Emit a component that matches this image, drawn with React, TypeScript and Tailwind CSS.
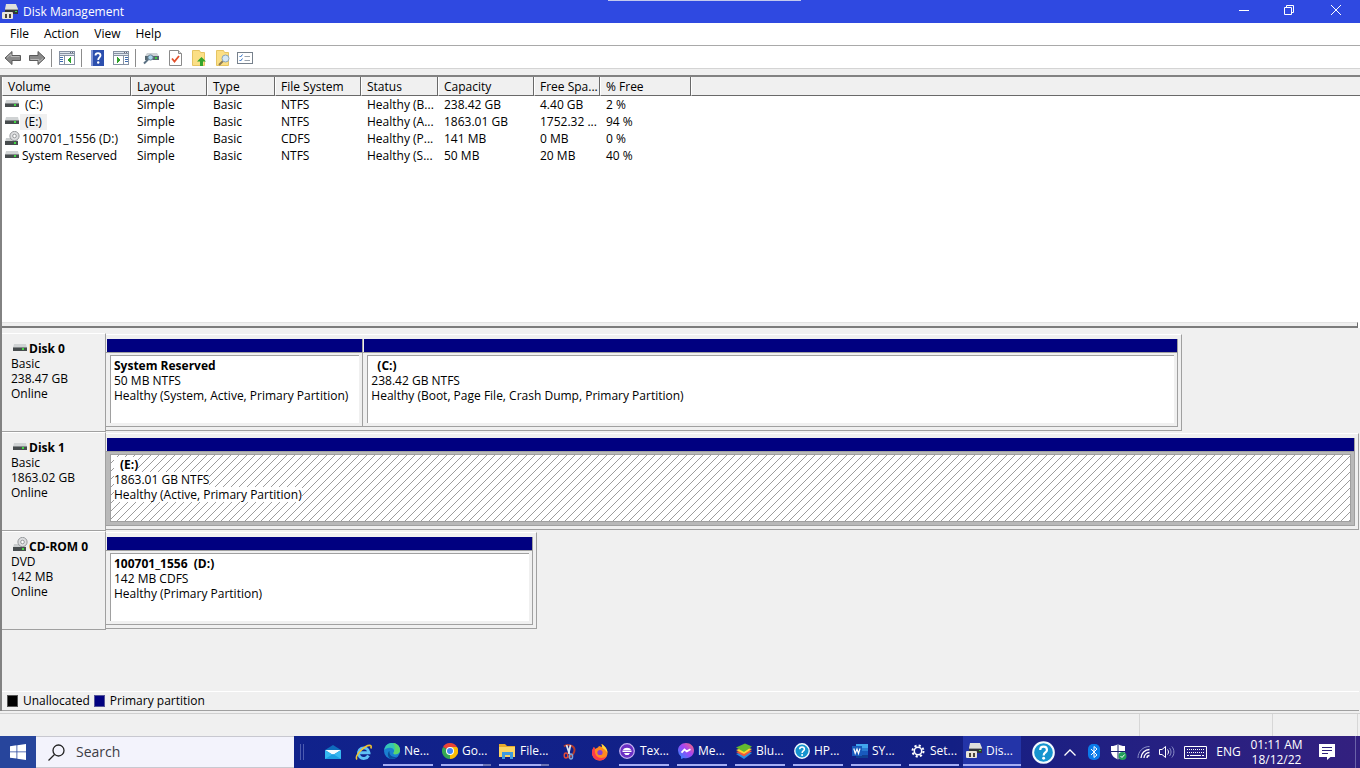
import type { ReactNode } from "react"

const volumes = [
  { name: "(C:)", icon: "disk", fs: "NTFS", status: "Healthy (B...", capacity: "238.42 GB", free: "4.40 GB", percent: "2 %" },
  { name: "(E:)", icon: "disk", fs: "NTFS", status: "Healthy (A...", capacity: "1863.01 GB", free: "1752.32 ...", percent: "94 %", selected: true },
  { name: "100701_1556 (D:)", icon: "cd", fs: "CDFS", status: "Healthy (P...", capacity: "141 MB", free: "0 MB", percent: "0 %" },
  { name: "System Reserved", icon: "disk", fs: "NTFS", status: "Healthy (S...", capacity: "50 MB", free: "20 MB", percent: "40 %" },
]

const columns = [
  { title: "Volume", width: "w-[129px]" },
  { title: "Layout", width: "w-[76px]" },
  { title: "Type", width: "w-[68px]" },
  { title: "File System", width: "w-[86px]" },
  { title: "Status", width: "w-[77px]" },
  { title: "Capacity", width: "w-[96px]" },
  { title: "Free Spa...", width: "w-[66px]" },
  { title: "% Free", width: "w-[91px]" },
]

/* ---------- drive icons ---------- */

const DiskIcon = () => (
  <svg width="14" height="14" viewBox="0 0 14 14" className="shrink-0">
    <path d="M1 2h12l1 4H0z" fill="#d0d3d4" />
    <rect y="5" width="14" height="4" fill="#474c4e" />
    <path d="M0 5h14v1H0z" fill="#85898b" />
    <rect x="9" y="6" width="2" height="2" fill="#41d943" />
  </svg>
)

const CdIcon = () => (
  <svg width="15" height="16" viewBox="0 0 15 16" className="shrink-0">
    <path d="M1 7h11l1 4H0z" fill="#c9cccd" />
    <rect y="10" width="13" height="4" fill="#474c4e" />
    <rect x="9" y="11" width="2" height="2" fill="#41d943" />
    <circle cx="9.500" cy="5" r="4.600" fill="#dcdddf" stroke="#96999b" />
    <circle cx="9.500" cy="5" r="1.800" fill="#fff" stroke="#96999b" />
  </svg>
)

const DiskManagementIcon = () => (
  <svg width="16" height="16" viewBox="0 0 16 16" className="shrink-0">
    <path d="M4 0h10l2 5H3z" fill="#dfe0dc" />
    <rect x="3" y="5" width="13" height="5" fill="#33363a" />
    <path d="M3 5h13v1H3z" fill="#9a9c9e" />
    <rect x="13" y="7" width="2" height="1" fill="#3fdc4a" />
    <rect x="0" y="8" width="11" height="7" rx="1" fill="#e9e5da" />
    <path d="M3 10h2v4H3zM7 10h2v4H7z" fill="#4a443c" />
  </svg>
)

/* ---------- toolbar ---------- */

const Arrow = ({ flip }: { flip?: boolean }) => (
  <svg width="18" height="16" viewBox="0 0 18 16" className={flip ? "rotate-180" : ""}>
    <path d="M1 8 8 1.500v4h8.500v5H8v4z" fill="#8a8a8a" stroke="#5a5a5a" strokeLinejoin="round" />
    <path d="M3 7.500 7 4v2.500h8.500" fill="none" stroke="#b8b8b8" />
  </svg>
)

const PaneIcon = ({ right }: { right?: boolean }) => (
  <svg width="16" height="14" viewBox="0 0 16 14" shapeRendering="crispEdges">
    <rect x="0" y="0" width="16" height="14" fill="#8792a3" />
    <rect x="1" y="1" width="14" height="1" fill="#dfe6ee" />
    <rect x="11" y="1" width="1" height="1" fill="#667" />
    <rect x="13" y="1" width="1" height="1" fill="#667" />
    <rect x="1" y="3" width="14" height="1" fill="#dfe6ee" />
    <rect x="1" y="5" width="14" height="8" fill="#fff" />
    {right ? (
      <>
        <path d="M10 5h1v8h-1z" fill="#8792a3" />
        <path d="M12 6h3v1h-3zM12 8h3v1h-3zM12 10h3v1h-3z" fill="#3c6bb0" />
        <path d="M4 6l4 3-4 3z" fill="#2fa32b" />
      </>
    ) : (
      <>
        <path d="M5 5h1v8H5z" fill="#8792a3" />
        <path d="M1 6h3v1H1zM1 8h3v1H1zM1 10h3v1H1z" fill="#3c6bb0" />
        <path d="M12 6 8 9l4 3z" fill="#2fa32b" />
      </>
    )}
  </svg>
)

const HelpIcon = () => (
  <svg width="13" height="16" viewBox="0 0 13 16">
    <rect width="13" height="16" fill="#2c4fae" />
    <path d="M0 0h2v16H0z" fill="#8095d6" />
    <path d="M4.500 5.500c0-3.200 5-3.200 5 0 0 2-2.300 2-2.300 4.500" fill="none" stroke="#fff" strokeWidth="1.800" />
    <circle cx="7.200" cy="12.500" r="1.200" fill="#fff" />
  </svg>
)

const RescanIcon = () => (
  <svg width="16" height="14" viewBox="0 0 16 14">
    <path d="M4 2h10l2 3H2z" fill="#cdd2d6" />
    <rect x="2" y="5" width="14" height="4" fill="#56676f" />
    <rect x="12" y="6" width="2" height="2" fill="#43d045" />
    <path d="M1 12.500 5.500 8" stroke="#5b7183" strokeWidth="2" />
    <circle cx="7.500" cy="6.500" r="2.600" fill="#a9d4ee" stroke="#6b8496" />
  </svg>
)

const CheckPageIcon = () => (
  <svg width="13" height="16" viewBox="0 0 13 16">
    <path d="M.5.500h9l3 3v12H.5z" fill="#fff" stroke="#8a8a8a" />
    <path d="M9.500.500v3h3" fill="#ddd" stroke="#8a8a8a" />
    <path d="m3 8.500 2.500 3L10 6" fill="none" stroke="#e2502a" strokeWidth="1.800" />
  </svg>
)

const FolderUpIcon = () => (
  <svg width="14" height="16" viewBox="0 0 14 16">
    <path d="M.5.500h7l1 2h4v13H.5z" fill="#fbdf85" stroke="#e6c462" />
    <path d="M9.500 7 14 11.500h-3V16H8v-4.500H5z" fill="#35a52c" />
  </svg>
)

const FolderFindIcon = () => (
  <svg width="15" height="16" viewBox="0 0 15 16">
    <path d="M.5.500h7l1 2h4v13H.5z" fill="#fbdf85" stroke="#e6c462" />
    <path d="m3 15 4-4" stroke="#8d7b54" strokeWidth="2" />
    <circle cx="9.500" cy="8.500" r="3.500" fill="#d4e8f5" stroke="#8ba5b8" />
  </svg>
)

const ChecklistIcon = () => (
  <svg width="16" height="12" viewBox="0 0 16 12">
    <rect x=".5" y=".5" width="15" height="11" fill="#fff" stroke="#77818c" />
    <path d="m2.500 4 1 1 2-2.500M2.500 8l1 1 2-2.500" fill="none" stroke="#2f6fc4" />
    <path d="M7.500 4.500H13M7.500 8.500H13" stroke="#9aa3ad" />
  </svg>
)

const ToolButton = ({ label, width = "w-6", children }: { label: string; width?: string; children: ReactNode }) => (
  <button aria-label={label} className={`${width} h-5 flex items-center justify-center`}>
    {children}
  </button>
)

const Divider = () => <div className="w-px h-[18px] ml-[2px] mr-[3px] bg-[#8c8c8c]" />

const Toolbar = () => (
  <div className="flex items-center h-[23px] pl-px pt-[2px] bg-white border-b border-[#d4d4d4]">
    <ToolButton label="Back"><Arrow /></ToolButton>
    <ToolButton label="Forward"><Arrow flip /></ToolButton>
    <Divider />
    <ToolButton label="Show console tree"><PaneIcon /></ToolButton>
    <Divider />
    <ToolButton label="Help"><HelpIcon /></ToolButton>
    <ToolButton label="Show action pane"><PaneIcon right /></ToolButton>
    <Divider />
    <ToolButton label="Rescan disks"><RescanIcon /></ToolButton>
    <ToolButton label="Properties"><CheckPageIcon /></ToolButton>
    <ToolButton label="Up"><FolderUpIcon /></ToolButton>
    <ToolButton label="Explore"><FolderFindIcon /></ToolButton>
    <ToolButton label="Settings" width="w-5"><ChecklistIcon /></ToolButton>
  </div>
)

const TitleBar = () => (
  <header className="relative flex items-center h-[23px] pl-[2px] bg-[#2f49e1] text-white">
    <DiskManagementIcon />
    <h1 className="ml-[5px] flex-1">Disk Management</h1>
    <div className="absolute top-0 left-[608px] w-[193px] h-px bg-[#c3c9ee]" />
    <button aria-label="Minimize" className="self-start w-[45px] h-5 flex items-center justify-center">
      <svg width="10" height="10"><path d="M0 5.500h10" stroke="#fff" /></svg>
    </button>
    <button aria-label="Restore" className="self-start w-[45px] h-5 flex items-center justify-center">
      <svg width="10" height="10" fill="none" stroke="#fff"><path d="M.5 2.500h7v7h-7zM2.500 2.500v-2h7v7h-2" /></svg>
    </button>
    <button aria-label="Close" className="self-start w-[49px] h-5 flex items-center justify-center">
      <svg width="10" height="10" stroke="#fff"><path d="m0 0 10 10M10 0 0 10" /></svg>
    </button>
  </header>
)

/* ---------- volume list ---------- */

const VolumeList = () => (
  <section className="min-h-[253px] flex flex-col bg-white border-t-2 border-l-2 border-[#828282]">
    <table className="w-full table-fixed border-separate border-spacing-0 text-left">
      <thead>
        <tr className="bg-[#f0f0f0]">
          {columns.map((c) => (
            <th key={c.title} className={`${c.width} h-[19px] p-0 pl-[5px] pt-[2px] font-normal border-l border-l-white border-r border-r-[#696969] border-b border-b-[#696969] whitespace-nowrap`}>
              {c.title}
            </th>
          ))}
          <th className="border-l border-l-white border-b border-b-[#696969]" />
        </tr>
      </thead>
      <tbody>
        {volumes.map((v) => (
          <tr key={v.name} className="h-[17px] whitespace-nowrap">
            <td className="p-0 pl-[3px]">
              <div className="flex items-center h-[17px]">
                <div className="w-[15px]">{v.icon === "cd" ? <CdIcon /> : <DiskIcon />}</div>
                <span className={v.name.startsWith("(") ? (v.selected ? "px-[5px] bg-[#f0f0f0]" : "px-[5px]") : "px-[2px]"}>{v.name}</span>
              </div>
            </td>
            <td className="p-0 pl-[6px]">Simple</td>
            <td className="p-0 pl-[6px]">Basic</td>
            <td className="p-0 pl-[6px]">{v.fs}</td>
            <td className="p-0 pl-[6px]">{v.status}</td>
            <td className="p-0 pl-[6px]">{v.capacity}</td>
            <td className="p-0 pl-[6px]">{v.free}</td>
            <td className="p-0 pl-[6px]">{v.percent}</td>
          </tr>
        ))}
      </tbody>
    </table>
    <div className="mt-auto h-[6px] mr-[2px] bg-[#f0f0f0] border-t border-t-[#e3e3e3] border-r border-r-[#696969] border-b-2 border-b-[#7c7c7c]" />
  </section>
)

/* ---------- disk map ---------- */

type PartitionProps = { name: string; size: string; status: string; width?: string; indent?: boolean; selected?: boolean }

const Hatch = () => (
  <svg className="absolute inset-0 w-full h-full" shapeRendering="crispEdges">
    <defs>
      <pattern id="hatch" width="8" height="8" patternUnits="userSpaceOnUse">
        <path d="M7 0h1v1H7zM6 1h1v1H6zM5 2h1v1H5zM4 3h1v1H4zM3 4h1v1H3zM2 5h1v1H2zM1 6h1v1H1zM0 7h1v1H0z" fill="#9c9c9c" />
      </pattern>
    </defs>
    <rect width="100%" height="100%" fill="url(#hatch)" />
  </svg>
)

const Partition = ({ name, size, status, width = "flex-1", indent, selected }: PartitionProps) => (
  <div className={`${width} flex flex-col border-r border-[#a0a0a0]`}>
    <div className="h-[13px] ml-px bg-[#000080]" />
    <div className={`flex-1 flex border-t border-b border-[#a0a0a0] pt-[2px] pb-[3px] pl-1 pr-[3px] ${selected ? "bg-[#b9b9b9]" : ""}`}>
      <div className={`relative flex-1 min-h-[68px] pt-[2px] pl-[3px] bg-white border-t border-l border-[#a0a0a0] leading-[15px] ${selected ? "border-r border-b" : ""}`}>
        {selected && <Hatch />}
        <div className="relative flex flex-col items-start whitespace-nowrap">
          <b className={`bg-white whitespace-pre ${indent ? "pl-[6px]" : ""}`}>{name}</b>
          <span className="bg-white">{size}</span>
          <span className="bg-white">{status}</span>
        </div>
      </div>
    </div>
  </div>
)

type DiskRowProps = { name: string; kind: string; size: string; cd?: boolean; width: string; children: ReactNode }

const DiskRow = ({ name, kind, size, cd, width, children }: DiskRowProps) => (
  <div className="flex h-[99px]">
    <div className="w-[104px] shrink-0 pl-[9px] pt-[7px] leading-[15px] border-t border-t-white border-b border-b-[#a0a0a0] border-r border-r-[#a0a0a0]">
      <div className="flex items-center gap-px h-[15px] pl-[2px]">
        {cd ? <div className="w-[15px] pb-1"><CdIcon /></div> : <div className="w-[15px]"><DiskIcon /></div>}
        <b>{name}</b>
      </div>
      <p>{kind}</p>
      <p>{size}</p>
      <p>Online</p>
    </div>
    <div className="flex-1 py-px">
      <div className={`${width} h-full flex pt-1 pb-[3px] pr-[3px] border-t border-t-white border-b border-b-[#a0a0a0] border-r border-r-[#a0a0a0]`}>
        {children}
      </div>
    </div>
  </div>
)

const DiskMap = () => (
  <section className="flex-1 flex flex-col pt-[5px] border-l-2 border-[#828282] mr-px">
    <DiskRow name="Disk 0" kind="Basic" size="238.47 GB" width="w-[85.9%]">
      <Partition name="System Reserved" size="50 MB NTFS" status="Healthy (System, Active, Primary Partition)" width="w-[24%]" />
      <Partition name="(C:)" size="238.42 GB NTFS" status="Healthy (Boot, Page File, Crash Dump, Primary Partition)" indent />
    </DiskRow>
    <DiskRow name="Disk 1" kind="Basic" size="1863.02 GB" width="w-full">
      <Partition name="(E:)" size="1863.01 GB NTFS" status="Healthy (Active, Primary Partition)" indent selected />
    </DiskRow>
    <DiskRow name="CD-ROM 0" kind="DVD" size="142 MB" cd width="w-[34.4%]">
      <Partition name="100701_1556  (D:)" size="142 MB CDFS" status="Healthy (Primary Partition)" />
    </DiskRow>
    <div className="mt-auto flex items-center h-5 pl-[5px] border-t border-t-white border-b border-b-[#a0a0a0]">
      <span className="w-[11px] h-3 mr-[5px] bg-black border border-[#555]" />
      <span>Unallocated</span>
      <span className="w-[11px] h-3 ml-1 mr-[5px] bg-[#000080] border border-[#555599]" />
      <span>Primary partition</span>
    </div>
  </section>
)

/* ---------- taskbar ---------- */

const MailIcon = () => (
  <svg width="16" height="16" viewBox="0 0 16 16">
    <path d="M0 6 8 1l8 5v9H0z" fill="#0f6cbd" />
    <path d="M0 6h16l-8 5z" fill="#f4fbff" />
    <path d="M0 6v9h16V6l-8 5z" fill="#35b8f1" />
    <path d="m0 15 8-5 8 5z" fill="#1b9de2" />
  </svg>
)

const IeIcon = () => (
  <svg width="17" height="17" viewBox="0 0 17 17" fill="none">
    <path d="M13.500 11.500A5.300 5.300 0 1 1 14 8.700H4.500" stroke="#5fc0f5" strokeWidth="2.900" />
    <path d="M2 15.500C-1 12 10 .5 15.500 1.500c1 .3.800 2 .2 3" stroke="#f3c42f" strokeWidth="1.600" />
  </svg>
)

const EdgeIcon = () => (
  <svg width="16" height="16" viewBox="0 0 16 16">
    <circle cx="8" cy="8" r="8" fill="#1a80d2" />
    <path d="M.3 7C1 2.500 4 0 8 0c5 0 8 3.500 8 7 0 3-2.500 4.300-4.500 4.300-2 0-2.500-1-1.800-1.800C11 8 9.500 4.800 6 4.800 3 4.800 1 6 .3 7z" fill="#35c6b5" />
    <path d="M9 .1c4.500.4 7 3.600 7 6.900 0 3-2.500 4.300-4.500 4.300-2 0-2.500-1-1.800-1.800C11.500 7 11 3 9 .1z" fill="#5ad66b" />
    <path d="M5.500 8c-.5 4 2.500 7 7.500 5.700A8 8 0 0 1 6 15.700C3.500 14 3 9.500 5.500 8z" fill="#0c4f9e" />
  </svg>
)

const ChromeIcon = () => (
  <svg width="16" height="16" viewBox="0 0 16 16">
    <path d="M8 8 1.070 4A8 8 0 0 1 14.930 4z" fill="#ea4335" />
    <path d="M8 8 14.930 4A8 8 0 0 1 8 16z" fill="#fbbc05" />
    <path d="M8 8v8A8 8 0 0 1 1.070 4z" fill="#34a853" />
    <path d="M8 4h6.930a8 8 0 0 1 0 8L11 10z" fill="#fbbc05" />
    <circle cx="8" cy="8" r="4" fill="#fff" />
    <circle cx="8" cy="8" r="3" fill="#4285f4" />
  </svg>
)

const ExplorerIcon = () => (
  <svg width="17" height="16" viewBox="0 0 17 16">
    <path d="M0 1h6l2 2h8v11H0z" fill="#e8a92c" />
    <path d="M0 4h16v10H0z" fill="#fcd462" />
    <path d="M3 16V9h11v7h-3v-4H6v4z" fill="#3f9be0" />
  </svg>
)

const SnipIcon = () => (
  <svg width="14" height="16" viewBox="0 0 14 16" fill="none">
    <path d="M2 2.500C5 0 12.500 1 12.500 6S9 12 6 13.500" stroke="#b43a2c" strokeWidth="2" />
    <path d="m4.500 1 3 9M8.500 1l-2 9" stroke="#dbe4ee" strokeWidth="1.800" />
    <ellipse cx="4" cy="11.500" rx="1.800" ry="2.500" stroke="#e04a37" strokeWidth="1.400" />
    <ellipse cx="9" cy="12.500" rx="1.600" ry="2.500" stroke="#7ba3d8" strokeWidth="1.400" />
  </svg>
)

const FirefoxIcon = () => (
  <svg width="17" height="17" viewBox="0 0 17 17">
    <path d="M1 9c0-3 1-5 2-6l1 2c1-1 3-1 4-3 1 0 2 1 3 1 0-1 0-2-.5-3C14 2 16.500 5 16.500 9c0 4-3.500 7.500-7.800 7.500S1 13 1 9z" fill="#ff8a1f" />
    <path d="M10.500 0C14 2 16.500 5 16.500 9c-1-2-3-4-5-5z" fill="#ffd93b" />
    <path d="M1 9c0 4 3.500 7.500 7.700 7.500 3 0 6-2 7.200-4.500-3 2.500-9 3-11-1C4 9 3.500 7 4 5L3 3C2 4 1 6 1 9z" fill="#fb3a4e" />
    <circle cx="9" cy="8.500" r="2.600" fill="#8a3fd0" />
  </svg>
)

const TextNowIcon = () => (
  <svg width="16" height="16" viewBox="0 0 16 16">
    <circle cx="8" cy="8" r="7.300" fill="#6b2fc4" stroke="#c8b3f2" strokeWidth="1.200" />
    <path d="M4 7c1-3 7-3 8 0z" fill="#fff" />
    <rect x="3.500" y="7.500" width="9" height="1.500" fill="#fff" />
    <path d="M5 10h6l-1.500 2h-3z" fill="#fff" />
  </svg>
)

const MessengerIcon = () => (
  <svg width="16" height="16" viewBox="0 0 16 16">
    <defs>
      <linearGradient id="messenger" x1="0" y1="1" x2="1" y2="0">
        <stop offset="0" stopColor="#1d8cff" />
        <stop offset=".55" stopColor="#a445f5" />
        <stop offset="1" stopColor="#ff6a6d" />
      </linearGradient>
    </defs>
    <path d="M8 0c4.600 0 8 3.300 8 7.600s-3.400 7.600-8 7.600c-.8 0-1.600-.1-2.300-.3L3 16v-2.500A7.400 7.400 0 0 1 0 7.600C0 3.300 3.400 0 8 0z" fill="url(#messenger)" />
    <path d="m3.500 9.700 3-3.200 2.300 1.900 3.700-2.100" fill="none" stroke="#fff" strokeWidth="1.800" />
  </svg>
)

const BlueStacksIcon = () => (
  <svg width="16" height="16" viewBox="0 0 16 16">
    <path d="m0 11 9-3 7 2-8 6z" fill="#2a8de0" />
    <path d="m0 9 9-3 7 2-8 5.500z" fill="#f05a3c" />
    <path d="m0 7 9-3 7 2-8 5z" fill="#ffd433" />
    <path d="m0 4.500 9-4 7 3-8 5.500z" fill="#63b92f" />
  </svg>
)

const HpHelpIcon = ({ size = 16 }: { size?: number }) => (
  <svg width={size} height={size} viewBox="0 0 16 16">
    <circle cx="8" cy="8" r="7.200" fill="#1694cf" stroke="#f3fbff" strokeWidth="1.400" />
    <path d="M5.700 6.200c0-3 4.700-3 4.700 0 0 1.700-2.300 1.800-2.300 3.800" fill="none" stroke="#fff" strokeWidth="1.500" />
    <circle cx="8.100" cy="12" r="1" fill="#fff" />
  </svg>
)

const WordIcon = () => (
  <svg width="16" height="16" viewBox="0 0 16 16">
    <path d="M4 1h12v4H4z" fill="#41a5ee" />
    <path d="M4 5h12v3H4z" fill="#2b7cd3" />
    <path d="M4 8h12v4H4z" fill="#185abd" />
    <path d="M4 12h12v3H4z" fill="#103f91" />
    <rect y="3" width="10" height="10" fill="#185abd" />
    <path d="m1.800 5.500 1.400 5L5 6l1.500 4.500 1.500-5" fill="none" stroke="#fff" strokeWidth="1.200" />
  </svg>
)

const SettingsIcon = () => (
  <svg width="14" height="14" viewBox="0 0 14 14" fill="none" stroke="#fff">
    <circle cx="7" cy="7" r="3.700" strokeWidth="1.500" />
    <circle cx="7" cy="7" r="5.500" strokeWidth="2" strokeDasharray="2.160 2.160" />
  </svg>
)

const tasks = [
  { label: "Ne...", icon: <EdgeIcon /> },
  { label: "Go...", icon: <ChromeIcon />, stacked: true },
  { label: "File...", icon: <ExplorerIcon />, stacked: true },
  { label: "Snipping Tool", icon: <SnipIcon />, pinned: true },
  { label: "Firefox", icon: <FirefoxIcon />, pinned: true },
  { label: "Tex...", icon: <TextNowIcon /> },
  { label: "Me...", icon: <MessengerIcon /> },
  { label: "Blu...", icon: <BlueStacksIcon /> },
  { label: "HP...", icon: <HpHelpIcon /> },
  { label: "SY...", icon: <WordIcon /> },
  { label: "Set...", icon: <SettingsIcon /> },
  { label: "Dis...", icon: <DiskManagementIcon />, active: true },
]

const Taskbar = () => (
  <footer className="flex h-8 bg-linear-to-r from-[#10228c] from-20% via-[#131f84] via-70% to-[#33207f] text-white">
    <button aria-label="Start" className="w-9 flex items-center justify-center bg-[#27459c]">
      <svg width="16" height="16" viewBox="0 0 16 16" fill="#fff">
        <path d="M0 2.200 6.500 1.300v6.200H0zM7.300 1.200 16 0v7.500H7.300zM0 8.300h6.500v6.300L0 13.700zM7.300 8.300H16V16l-8.700-1.200z" />
      </svg>
    </button>
    <label className="w-[258px] flex items-center pl-3 bg-[#f3f3fc] border-y border-[#c8c8d0]">
      <svg width="17" height="17" viewBox="0 0 17 17" fill="none" stroke="#222" strokeWidth="1.300">
        <circle cx="10.500" cy="6.500" r="5.500" />
        <path d="M6.500 10.500.5 16.500" />
      </svg>
      <input aria-label="Search" placeholder="Search" className="w-40 ml-[11px] text-sm placeholder:text-[#3c3c44] outline-none" />
    </label>
    <div className="flex gap-[2px] py-2 px-[6px]">
      <div className="w-px bg-[#4c5bb0]" />
      <div className="w-px bg-[#4c5bb0]" />
    </div>
    <div className="flex ml-[7px]">
      <button aria-label="Mail" className="w-[31px] flex items-center justify-center"><MailIcon /></button>
      <button aria-label="Internet Explorer" className="w-[31px] flex items-center justify-center"><IeIcon /></button>
      {tasks.map((t) =>
        t.pinned ? (
          <button key={t.label} aria-label={t.label} className="w-[31px] flex items-center justify-center">{t.icon}</button>
        ) : (
          <button key={t.label} className={`w-[58px] flex flex-col pt-[2px] ${t.active ? "bg-[#2334a8]" : "px-1"}`}>
            <span className={`flex-1 flex items-center gap-1 whitespace-nowrap ${t.active ? "px-[2px]" : ""}`}>
              <span className="w-[17px] flex justify-center">{t.icon}</span>
              {t.label}
            </span>
            <span className="w-full h-[2px] mb-[2px] flex bg-[#a5aef5]">
              {t.stacked && <span className="ml-auto w-2 bg-[#6c74b4]" />}
            </span>
          </button>
        )
      )}
    </div>
    <div className="ml-auto flex items-center">
      <button aria-label="HP Support" className="w-[30px] flex justify-center"><HpHelpIcon size={23} /></button>
      <button aria-label="Show hidden icons" className="w-6 flex justify-center">
        <svg width="12" height="7" fill="none" stroke="#fff" strokeWidth="1.300"><path d="m.5 6.500 5.500-5.500 5.500 5.500" /></svg>
      </button>
      <button aria-label="Bluetooth" className="w-6 flex justify-center">
        <svg width="12" height="16" viewBox="0 0 12 16">
          <rect width="12" height="16" rx="5" fill="#0a7bea" />
          <path d="m3 5 6 6-3 2.500v-11L9 5l-6 6" fill="none" stroke="#fff" />
        </svg>
      </button>
      <button aria-label="Windows Security" className="w-[25px] flex justify-center">
        <svg width="17" height="17" viewBox="0 0 17 17">
          <path d="M8 0c2 1.500 4 2 7 2v5c0 4-3 7-7 8.500C4 14 1 11 1 7V2c3 0 5-.5 7-2z" fill="#fff" />
          <path d="M8 0v15.500M1 7.500h14" stroke="#18206e" />
          <circle cx="12.500" cy="12" r="4" fill="#21a05a" />
          <path d="m10.500 12 1.500 1.500 2.700-3" fill="none" stroke="#fff" />
        </svg>
      </button>
      <button aria-label="Network" className="w-6 flex justify-center">
        <svg width="13" height="14" viewBox="0 0 13 14" fill="none" stroke="#fff">
          <path d="M1 13C1 6.500 6 1.500 12.500 1.500" stroke="#8b8fc8" />
          <path d="M4 13c0-4.500 4-8.500 8.500-8.500M7 13c0-3 2.500-5.500 5.500-5.500M10 13c0-1.500 1-2.500 2.500-2.500" strokeWidth="1.300" />
        </svg>
      </button>
      <button aria-label="Volume" className="w-6 flex justify-center">
        <svg width="16" height="14" viewBox="0 0 16 14" fill="none" stroke="#fff">
          <path d="M.5 4.500H3L6.500 1.500v11L3 9.500H.5zM8.500 4.500c1.300 1.500 1.300 3.500 0 5" />
          <path d="M10.500 3c2 2.300 2 5.700 0 8M12.800 1.500c2.800 3 2.800 8 0 11" stroke="#8b8fc8" />
        </svg>
      </button>
      <button aria-label="Touch keyboard" className="w-8 flex justify-center">
        <svg width="23" height="13" viewBox="0 0 23 13" fill="none" stroke="#fff">
          <path d="M.5.500h22v12H.5z" />
          <path d="M3 3.500h17M3 6.500h17" strokeDasharray="1 1" strokeWidth="1" />
          <path d="M3 9.500h2M6 9.500h11M18 9.500h2" />
        </svg>
      </button>
      <button className="w-[35px]">ENG</button>
      <button className="w-[61px] leading-[15px]">
        01:11 AM
        <br />
        18/12/22
      </button>
      <button aria-label="Notifications" className="w-10 flex justify-center">
        <svg width="16" height="16" viewBox="0 0 16 16">
          <path d="M0 0h16v13h-4.500L8 16v-3H0z" fill="#fff" />
          <path d="M3 3.500h10M3 6.500h10M3 9.500h6" stroke="#2d207b" />
        </svg>
      </button>
      <div className="w-2" />
      <div className="w-[5px] h-8 border-l border-[#6a62a8]" />
    </div>
  </footer>
)

const App = () => (
  <div className="min-h-screen flex flex-col bg-[#f0f0f0] text-black text-[12px] leading-4 font-['Open_Sans','Noto_Sans',sans-serif]">
    <TitleBar />
    <nav className="flex items-center gap-[15px] h-[23px] pl-[10px] bg-white border-b border-[#a9a9a9]">
      <button>File</button>
      <button>Action</button>
      <button>View</button>
      <button>Help</button>
    </nav>
    <Toolbar />
    <main className="flex-1 flex flex-col pt-[6px]">
      <VolumeList />
      <DiskMap />
    </main>
    <div className="mt-[2px] flex h-[23px] border-t border-[#d0d0d0]">
      <div className="flex-1 border-r border-[#d7d7d7]" />
      <div className="w-[133px] border-r border-[#d7d7d7]" />
      <div className="w-[85px] border-r border-[#d7d7d7]" />
      <div className="w-[2px]" />
    </div>
    <Taskbar />
  </div>
)

export default App
